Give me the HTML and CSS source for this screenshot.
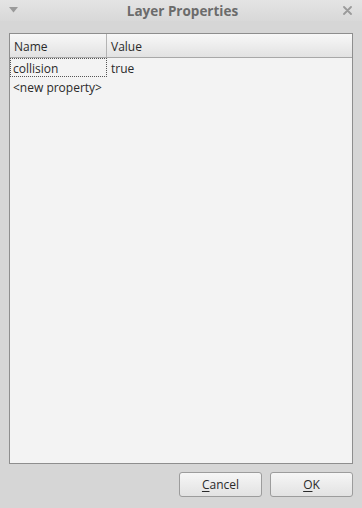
FILE: index.html
```html
<!DOCTYPE html>
<html>
<head>
<meta charset="utf-8">
<link rel="stylesheet" href="styles.css">
</head>
<body>
<div class="window">
  <div class="titlebar">
    <svg class="menu-arrow" width="9" height="6" viewBox="0 0 9 6"><path d="M0 0 H9 L4.5 5.5 Z" fill="#9a9a9a"/></svg>
    <div class="title">Layer Properties</div>
    <svg class="close" width="9" height="9" viewBox="0 0 9 9"><path d="M1 1 L8 8 M8 1 L1 8" stroke="#9a9a9a" stroke-width="1.8" stroke-linecap="round"/></svg>
  </div>
  <div class="content">
    <div class="table">
      <div class="thead">
        <div class="th name-col">Name</div>
        <div class="th value-col">Value</div>
      </div>
      <div class="tbody">
        <div class="row">
          <div class="td name-col focus">collision</div>
          <div class="td value-col">true</div>
        </div>
        <div class="row">
          <div class="td name-col new">&lt;new property&gt;</div>
        </div>
      </div>
    </div>
    <div class="buttons">
      <button class="btn"><u>C</u>ancel</button>
      <button class="btn"><u>O</u>K</button>
    </div>
  </div>
</div>
</body>
</html>
```
FILE: styles.css
```css
* { box-sizing: border-box; }
html, body { margin: 0; padding: 0; }
body {
  width: 362px;
  height: 508px;
  background: #d6d6d6;
  font-family: "Open Sans", "DejaVu Sans", sans-serif;
  font-size: 12px;
  color: #2a2a2a;
  overflow: hidden;
}
.window { display: flex; flex-direction: column; height: 508px; }
.titlebar {
  height: 22px;
  display: flex;
  align-items: center;
  justify-content: space-between;
  padding: 0 10px 0 9px;
  background: linear-gradient(#e4e4e4, #d8d8d8);
}
.menu-arrow { margin-top: -2px; }
.title {
  font-weight: bold;
  font-size: 13.5px;
  color: #6b6b6b;
  margin-left: 4px;
}
.content {
  flex: 1;
  display: flex;
  flex-direction: column;
  padding: 12px 9px 11px 9px;
}
.table {
  height: 431px;
  border: 1px solid #8e8e8e;
  background: #f3f3f3;
  display: flex;
  flex-direction: column;
}
.thead {
  display: flex;
  height: 24px;
  background: linear-gradient(#f8f8f8, #e2e2e2);
  border-bottom: 1px solid #a8a8a8;
}
.th {
  display: flex;
  align-items: center;
  padding-left: 4px;
  padding-top: 1px;
}
.thead .name-col { border-right: 1px solid #b4b4b4; }
.name-col { width: 97px; }
.value-col { flex: 1; }
.row { display: flex; height: 19px; }
.td {
  display: flex;
  align-items: center;
  padding-left: 3px;
  padding-top: 1px;
}
.td.value-col { padding-left: 4px; }
.focus { outline: 1px dotted #555; outline-offset: -1px; }
.new { width: auto; padding-left: 3px; }
.buttons {
  display: flex;
  justify-content: flex-end;
  gap: 8px;
  margin-top: 8px;
}
.btn {
  width: 83px;
  height: 25px;
  font-family: "Open Sans", "DejaVu Sans", sans-serif;
  font-size: 12px;
  color: #2a2a2a;
  border: 1px solid #9c9c9c;
  border-radius: 3px;
  background: linear-gradient(#f6f6f6, #e2e2e2);
  padding: 0;
}
.btn u { text-decoration-thickness: 1px; text-underline-offset: 2px; }
```
